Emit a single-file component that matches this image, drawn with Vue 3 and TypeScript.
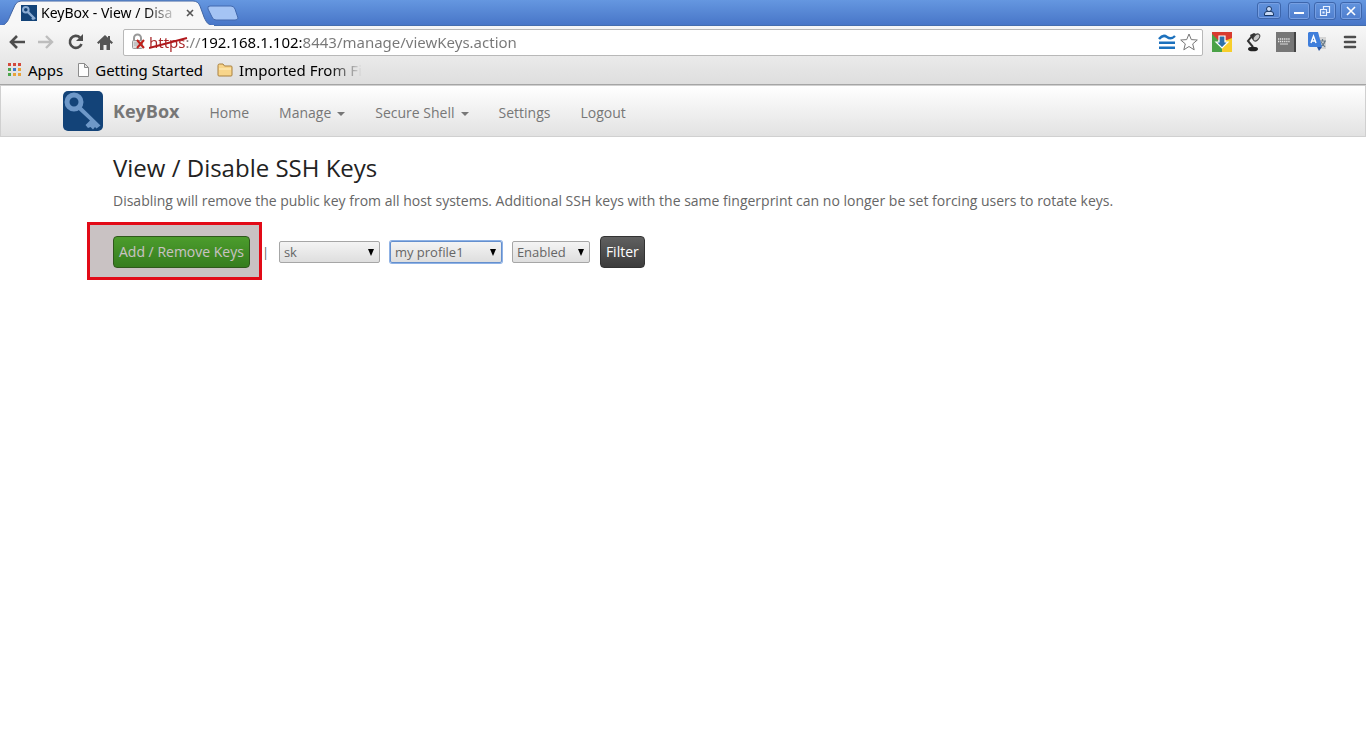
<script setup lang="ts">
import { ref } from 'vue'

const address = ref('https://192.168.1.102:8443/manage/viewKeys.action')
const user = ref('sk')
const profile = ref('my profile1')
const status = ref('Enabled')

const links = [
  { label: 'Home', menu: false },
  { label: 'Manage', menu: true },
  { label: 'Secure Shell', menu: true },
  { label: 'Settings', menu: false },
  { label: 'Logout', menu: false },
]

const appColors = ['#d34a3c', '#d34a3c', '#d34a3c', '#4ca64c', '#3f78c9', '#e8a33a', '#4ca64c', '#e8a33a', '#e8a33a']
</script>

<template>
  <div class="window">
    <header class="chrome">
      <div class="titlebar">
        <div class="tab">
          <svg class="tab-shape" viewBox="0 0 214 26" aria-hidden="true">
            <path d="M0 26 C6 25 8 21 10 16 L15 5 Q17 1 21 1 H193 Q198 1 200 6 L204 17 C207 24 209 25 214 26 Z" fill="#f7f7f7" stroke="#4165a3" stroke-width="1" />
            <path d="M0 25h214v2H0z" fill="#f7f7f7" />
          </svg>
          <svg class="favicon" viewBox="0 0 40 40" aria-hidden="true">
            <rect width="40" height="40" fill="#134378" />
            <circle cx="12" cy="12" r="7" fill="none" stroke="#8bacd3" stroke-width="5" />
            <path d="M17 17 L35 35 M32 31 L28 36" stroke="#8bacd3" stroke-width="6" fill="none" />
          </svg>
          <span class="tab-title">KeyBox - View / Disa</span>
          <button class="tab-close" aria-label="Close tab">
            <svg width="8" height="8" viewBox="0 0 8 8"><path d="M1 1l6 6M7 1L1 7" stroke="#555" stroke-width="1.6" /></svg>
          </button>
        </div>
        <button class="new-tab" aria-label="New tab">
          <svg width="32" height="16" viewBox="0 0 32 16"><path d="M3 1H24Q27 1 28 4L31 13Q31 15 28 15H9Q6 15 5 12L1 4Q0 1 3 1Z" fill="#a5c4f4" stroke="#4269ae" /></svg>
        </button>
        <div class="window-buttons">
          <button class="profile-button" aria-label="User">
            <svg width="12" height="12" viewBox="0 0 12 12" fill="#c8daf6" stroke="#183766"><path d="M1.500 10.500V9Q1.500 6.500 4 6.500H8Q10.500 6.500 10.500 9V10.500Z" /><circle cx="6" cy="4" r="2.500" /></svg>
          </button>
          <button aria-label="Minimize">
            <svg width="14" height="14" viewBox="0 0 14 14"><path d="M2 8h10v2H2z" fill="#fff" /></svg>
          </button>
          <button aria-label="Restore">
            <svg width="14" height="14" viewBox="0 0 14 14" fill="none" stroke="#e7f0ff" stroke-width="1.2"><path d="M5.500 5V2.500h6v6H9M2.500 5.500h6v6h-6zM5 8h1v1H5z" /></svg>
          </button>
          <button aria-label="Close">
            <svg width="14" height="14" viewBox="0 0 14 14"><path d="M3 3l8 8M11 3l-8 8" stroke="#fff" stroke-width="1.6" /></svg>
          </button>
        </div>
      </div>

      <div class="toolbar">
        <button class="tool" aria-label="Back">
          <svg width="18" height="18" viewBox="0 0 18 18" fill="none" stroke="#4d4d4d" stroke-width="2.6"><path d="M17 9H3M9 3L3 9l6 6" /></svg>
        </button>
        <button class="tool" aria-label="Forward">
          <svg width="18" height="18" viewBox="0 0 18 18" fill="none" stroke="#bdbdbd" stroke-width="2.4"><path d="M1 9h14M9 3l6 6-6 6" /></svg>
        </button>
        <button class="tool" aria-label="Reload">
          <svg width="18" height="18" viewBox="0 0 18 18"><path d="M15.500 11A6 6 0 1 1 14 4.500" fill="none" stroke="#4d4d4d" stroke-width="2.6" /><path d="M17 1v7H10z" fill="#4d4d4d" /></svg>
        </button>
        <button class="tool" aria-label="Home page">
          <svg width="18" height="18" viewBox="0 0 18 18"><path d="M10 2L2 9.500L3.500 11L5 9.700V17H8.500V12H11.500V17H15V9.700L16.500 11L18 9.500L15 6.700V3H13V4.800Z" fill="#555" /></svg>
        </button>
        <div class="address-box">
          <svg class="lock" width="16" height="18" viewBox="0 0 16 18" aria-hidden="true">
            <path d="M3 8V5a3.500 3.500 0 0 1 7 0v3" fill="none" stroke="#999" stroke-width="2" />
            <rect x="1.500" y="7.500" width="10" height="8" rx="1" fill="#ddd" stroke="#999" />
            <path d="M3 10h7M3 12h7" stroke="#aaa" />
            <path d="M6 7l7 8M13 7l-7 8" stroke="#c0211b" stroke-width="2" />
          </svg>
          <div class="address-field">
            <input v-model="address" class="address" type="text" aria-label="Address" spellcheck="false" />
            <svg class="strike" width="40" height="14" viewBox="0 0 40 14" aria-hidden="true"><path d="M0 12L38 2" stroke="#b0181c" stroke-width="2" /></svg>
          </div>
          <svg width="18" height="16" viewBox="0 0 18 16" aria-hidden="true"><path d="M1 5Q5 0 9 3T17 2" fill="none" stroke="#1c71bd" stroke-width="2.400" /><path d="M1 7.500h16v2.500H1zM1 12.500h16V15H1z" fill="#1c71bd" /></svg>
          <button class="star" aria-label="Bookmark this page">
            <svg width="18" height="18" viewBox="0 0 18 18"><path d="M9 1L11.300 6.600L17.300 7L12.700 10.900L14.200 16.800L9 13.500L3.800 16.800L5.300 10.900L.7 7L6.700 6.600Z" fill="#fff" stroke="#777" /></svg>
          </button>
        </div>
        <div class="extensions">
          <button aria-label="Downloads">
            <svg width="20" height="20" viewBox="0 0 20 20"><path d="M0 0h20v8H0z" fill="#d83b2f" /><path d="M0 2l10 10v8H0z" fill="#4aa247" /><path d="M20 6v14H10V10z" fill="#f7ce2b" /><path d="M7 4h6v6h3l-6 6-6-6h3z" fill="#2d70a9" stroke="#fff" stroke-width="1.200" /></svg>
          </button>
          <button aria-label="Lamp">
            <svg width="20" height="20" viewBox="0 0 20 20"><path d="M8 4L4 9L9 15" fill="none" stroke="#333" stroke-width="2" /><path d="M6 3L10 1L14 3L11 9L8 7Z" fill="#333" /><ellipse cx="12.500" cy="5.500" rx="2.500" ry="4" transform="rotate(40 12.500 5.500)" fill="#c9c9c9" stroke="#444" /><ellipse cx="9" cy="17" rx="5" ry="2.300" fill="#222" /></svg>
          </button>
          <button aria-label="Keyboard">
            <svg width="20" height="20" viewBox="0 0 20 20"><path d="M0 0h20v20H0z" fill="#777" /><path d="M18 0h2v20h-2z" fill="#444" /><path d="M2 7h12M2 9.500h12" stroke="#e5e5e5" stroke-width="1.400" stroke-dasharray="1.200 .7" /><path d="M4 12h8" stroke="#ddd" /></svg>
          </button>
          <button aria-label="Translate">
            <svg width="20" height="20" viewBox="0 0 20 20"><path d="M8 5h10v12h-7z" fill="#d4d4d4" /><path d="M11 9h7M14.500 7v2M17 9q-1 4-4 5M13 10l4 5" fill="none" stroke="#697b88" stroke-width="1.200" /><path d="M1 0h9l4 15H2Q0 15 0 13V1Z" fill="#3f7edb" /><path d="M9 15h5l-3 4z" fill="#2856a5" /><path d="M3 11L5.500 4L8 11M4 9h3.500" fill="none" stroke="#fff" stroke-width="1.400" /></svg>
          </button>
          <button aria-label="Browser menu">
            <svg width="14" height="14" viewBox="0 0 14 14"><path d="M2 2h10M2 7h10M2 12h10" stroke="#4d4d4d" stroke-width="2.600" stroke-linecap="round" /></svg>
          </button>
        </div>
      </div>

      <nav class="bookmarks" aria-label="Bookmarks">
        <a href="#">
          <svg width="14" height="14" viewBox="0 0 14 14" aria-hidden="true"><rect v-for="(c, i) in appColors" :key="i" :x="(i % 3) * 5" :y="Math.floor(i / 3) * 5" width="3" height="3" :fill="c" /></svg>
          <span>Apps</span>
        </a>
        <a href="#">
          <svg width="12" height="14" viewBox="0 0 12 14" aria-hidden="true"><path d="M1.500.5h6l4 4v9h-10zM7.500.5v4h4" fill="#fdfdfd" stroke="#8c8c8c" /></svg>
          <span>Getting Started</span>
        </a>
        <a href="#">
          <svg width="16" height="14" viewBox="0 0 16 14" aria-hidden="true"><path d="M1 12V2.500Q1 1 2.500 1H6L7.500 3H14Q15 3 15 4V12Q15 13 14 13H2Q1 13 1 12Z" fill="#f8d58a" stroke="#a9803e" /><path d="M2 6h12" stroke="#fff0c2" /></svg>
          <span class="faded">Imported From Fi</span>
        </a>
      </nav>
    </header>

    <nav class="navbar">
      <div class="container nav-row">
        <svg class="logo" viewBox="0 0 40 40" role="img" aria-label="Key">
          <rect width="40" height="40" rx="5" fill="#134378" />
          <path d="M16.500 14L37.500 34.500L33.500 37.500L32 36L30 38.500L27.500 36L25 37L22.500 34L27 29.500L13.500 17Z" fill="#6e98c8" />
          <circle cx="11" cy="11" r="7" fill="none" stroke="#6e98c8" stroke-width="5" />
        </svg>
        <a class="brand" href="#">KeyBox</a>
        <a v-for="link in links" :key="link.label" class="nav-link" href="#">{{ link.label }}<i v-if="link.menu" class="caret"></i></a>
      </div>
    </nav>

    <main class="container">
      <h1>View / Disable SSH Keys</h1>
      <p>Disabling will remove the public key from all host systems. Additional SSH keys with the same fingerprint can no longer be set forcing users to rotate keys.</p>
      <form class="filters" @submit.prevent>
        <div class="highlighted">
          <button type="button" class="button green">Add / Remove Keys</button>
        </div>
        <span class="divider">|</span>
        <span class="select user"><select v-model="user" aria-label="User"><option>sk</option></select></span>
        <span class="select profile active"><select v-model="profile" aria-label="Profile"><option>my profile1</option></select></span>
        <span class="select status"><select v-model="status" aria-label="Status"><option>Enabled</option><option>Disabled</option></select></span>
        <button type="submit" class="button dark">Filter</button>
      </form>
    </main>
  </div>
</template>

<style>
body {
  margin: 0;
  background: #fff;
}
</style>

<style scoped>
.window {
  min-height: 100vh;
  font-family: "Open Sans", sans-serif;
  font-size: 14px;
  line-height: 20px;
  color: #666;
}
.window *,
.window *::before,
.window *::after {
  box-sizing: border-box;
}
button {
  padding: 0;
  border: 0;
  background: none;
  font: inherit;
}
svg {
  display: block;
  flex: none;
}
.chrome {
  font-family: "Noto Sans", sans-serif;
  font-size: 15px;
  color: #000;
  background: linear-gradient(#f7f7f7 26px, #dedede);
  border-bottom: 1px solid #a5a5a5;
}
.titlebar {
  display: flex;
  height: 26px;
  background: linear-gradient(#6597e0, #4876c8);
  border-bottom: 1px solid #456eae;
}
.tab {
  position: relative;
  display: flex;
  align-items: center;
  width: 207px;
  height: 26px;
  padding-left: 21px;
}
.tab-shape {
  position: absolute;
  top: 0;
  left: 0;
  width: 214px;
  height: 26px;
}
.favicon {
  position: relative;
  width: 16px;
  height: 16px;
}
.tab-title {
  position: relative;
  width: 138px;
  margin-left: 4px;
  font-size: 14px;
  white-space: nowrap;
  mask-image: linear-gradient(90deg, #000 104px, transparent);
}
.tab-close {
  position: relative;
  margin-left: 7px;
}
.new-tab {
  align-self: center;
}
.window-buttons {
  display: flex;
  gap: 4px;
  margin-left: auto;
  padding: 2px 4px 0 0;
}
.window-buttons button {
  display: grid;
  place-items: center;
  width: 22px;
  height: 18px;
  border: 1px solid #3d66ac;
  border-radius: 3px;
  box-shadow: inset 0 0 0 1px #779fe2;
}
.window-buttons .profile-button {
  width: 24px;
  height: 17px;
  margin-right: 3px;
}
.toolbar {
  display: flex;
  align-items: center;
  height: 32px;
  padding: 0 9px 0 8px;
}
.tool {
  width: 18px;
  margin-right: 11px;
}
.address-box {
  display: flex;
  flex: 1;
  align-items: center;
  gap: 4px;
  height: 27px;
  margin-left: -1px;
  padding: 0 4px 0 7px;
  background: #fff;
  border: 1px solid #b8b8b8;
  border-radius: 2px;
}
.address-field {
  position: relative;
  flex: 1;
  margin-left: -2px;
}
.address {
  display: block;
  width: 100%;
  height: 24px;
  padding: 0;
  border: 0;
  outline: 0;
  font: 15px/24px "Noto Sans", sans-serif;
  color: transparent;
  background: linear-gradient(90deg, #a82426 38px, #808080 38px 53px, #000 53px 153px, #777 153px);
  background-clip: text;
}
.strike {
  position: absolute;
  top: 6px;
  left: 0;
}
.extensions {
  display: flex;
  align-items: center;
  gap: 12px;
  margin-left: 9px;
}
.extensions button:last-child {
  margin-left: 3px;
}
.bookmarks {
  display: flex;
  gap: 14px;
  height: 26px;
  padding: 0 8px;
}
.bookmarks a {
  display: flex;
  align-items: center;
  gap: 6px;
  height: 24px;
  color: inherit;
  text-decoration: none;
  white-space: nowrap;
}
.faded {
  mask-image: linear-gradient(90deg, #000 90px, transparent);
}
.container {
  max-width: 1170px;
  margin: 0 auto;
  padding: 0 15px;
}
.navbar {
  border: 1px solid #d0d0d0;
  background: linear-gradient(#fff, #e2e2e2);
}
.nav-row {
  display: flex;
  align-items: center;
  height: 50px;
}
.logo {
  width: 40px;
  height: 40px;
  margin: 0 10px 0 -50px;
}
.brand {
  margin-right: 15px;
  font-size: 18px;
  font-weight: 700;
  color: #777;
  text-decoration: none;
}
.nav-link {
  display: flex;
  align-items: center;
  padding: 4px 15px 0;
  color: #777;
  text-decoration: none;
}
.caret {
  margin: 2px 0 0 6px;
  border: 4px solid transparent;
  border-top-color: #777;
  border-bottom: 0;
}
h1 {
  margin: 17px 0 0;
  font-size: 24px;
  font-weight: 400;
  line-height: 28px;
  color: #222;
}
p {
  margin: 9px 0 0;
}
.filters {
  display: flex;
  align-items: center;
  margin-top: 25px;
}
.highlighted {
  position: relative;
}
.highlighted::after {
  content: "";
  position: absolute;
  inset: -14px -12px -12px -26px;
  border: 3px solid #e20a17;
  background: rgba(60, 35, 40, .28);
  background-clip: padding-box;
  pointer-events: none;
}
.button {
  height: 32px;
  padding: 0 5px;
  border-radius: 4px;
  color: #fff;
  white-space: nowrap;
}
.green {
  border: 1px solid #2a6d18;
  background: linear-gradient(#52cb2f, #34a01c);
}
.dark {
  border: 1px solid #333;
  background: linear-gradient(#606060, #3c3c3c);
}
.divider {
  width: 29px;
  padding-left: 12px;
  font-size: 13px;
}
.select {
  position: relative;
  margin-right: 10px;
}
.select::after {
  content: "";
  position: absolute;
  top: 8px;
  right: 6px;
  border: 3px solid transparent;
  border-top: 7px solid #000;
  border-bottom: 0;
  pointer-events: none;
}
select {
  display: block;
  width: 100%;
  height: 22px;
  padding: 0 4px;
  appearance: none;
  border: 1px solid #a6a6a6;
  border-radius: 2px;
  background: linear-gradient(#f4f4f4, #dedede);
  font: 13px/20px "Open Sans", sans-serif;
  color: #666;
}
.active select {
  border-color: #648fce;
  box-shadow: 0 0 0 1px #8fb2e5;
}
.user {
  width: 101px;
}
.profile {
  width: 112px;
}
.status {
  width: 78px;
}
</style>
